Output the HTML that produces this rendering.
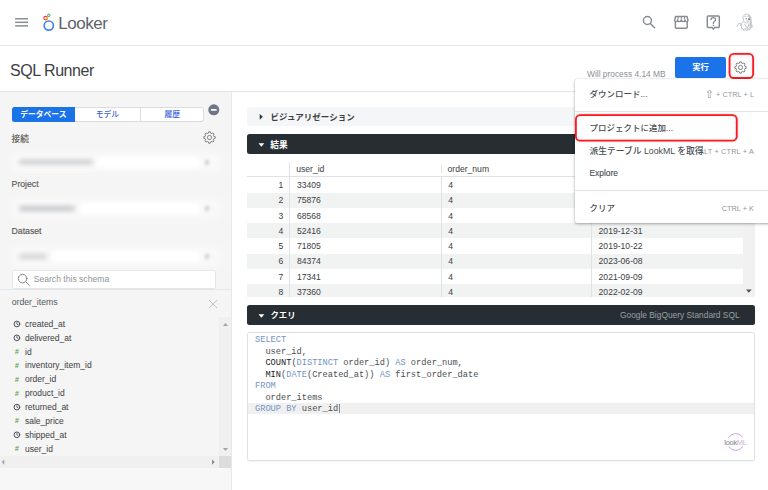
<!DOCTYPE html>
<html lang="ja">
<head>
<meta charset="utf-8">
<title>SQL Runner - Looker</title>
<style>
*{box-sizing:border-box;margin:0;padding:0}
html,body{width:768px;height:490px;overflow:hidden;background:#fff}
body{position:relative;font-family:"Liberation Sans","Noto Sans CJK JP",sans-serif;color:#3c4043;-webkit-font-smoothing:antialiased}
.abs{position:absolute;white-space:nowrap}
svg{position:absolute;overflow:visible}
/* header */
#hdr{left:0;top:0;width:768px;height:46px;border-bottom:1px solid #e3e5e8;background:#fff}
#ham i{position:absolute;left:15px;width:13px;height:1.5px;background:#8a9095;display:block}
#brand{left:58.3px;top:13.5px;font-size:17px;line-height:20px;letter-spacing:-0.45px;color:#5f6368}
/* title bar */
#tbar{left:0;top:46px;width:768px;height:46px;border-bottom:1px solid #e3e5e8;background:#fff}
#title{left:10px;top:60.5px;font-size:16px;line-height:20px;letter-spacing:-0.45px;color:#3c4043}
#proc{left:587px;top:69px;font-size:8.4px;line-height:11px;color:#8b9096}
#run{left:675px;top:57px;width:51px;height:21px;background:#1a73e8;border-radius:2px;color:#fff;font-weight:bold;font-size:8.3px;line-height:20.6px;text-align:center}
#gearbox{left:728.6px;top:53px;width:25.5px;height:26px;border:1.8px solid #fb1d25;border-radius:5px;box-shadow:0 0 2.5px rgba(120,0,0,.4),inset 0 0 4px rgba(0,0,0,.13)}
/* left panel */
#side{left:0;top:92px;width:232px;height:398px;background:#f5f5f5;border-right:1px solid #e6e8eb}
#tabs{left:11.7px;top:106.6px;width:192px;height:15px;background:#fff;border:1px solid #dadce0;border-radius:2.5px}
#tabs .t{position:absolute;top:-1px;height:15px;font-size:7.8px;line-height:16.6px;text-align:center;color:#3a5fd6;font-weight:500;overflow:hidden}
#tabs .t1{left:-1px;width:63.3px;background:#1a73e8;color:#fff;font-weight:bold;border-radius:2.5px 0 0 2.5px}
#tabs .t2{left:62.3px;width:64.7px}
#tabs .t3{left:127px;width:64px;border-left:1px solid #dadce0}
.lbl{font-size:8.7px;line-height:12px;color:#5a5754;left:11.6px;-webkit-text-stroke:.15px #5a5754}
.blur{filter:blur(2.6px)}
#sbox{left:12px;top:270.3px;width:204.3px;height:18.4px;background:#fff;border:1px solid #e4e6e9;border-radius:1.5px}
#sph{left:33.7px;top:273.2px;font-size:8.6px;line-height:12px;color:#8f9499}
#sline{left:0;top:289.4px;width:231px;height:1px;background:#e4e6e9}
#tname{left:11.7px;top:296.3px;font-size:8.7px;line-height:12px;color:#54585d}
.fld{left:25px;font-size:8.5px;line-height:12px;color:#3c4043}
.hash{left:14.7px;font-size:7.3px;line-height:10px;color:#65a44a;font-weight:bold;font-style:italic;margin-top:.7px}
#vtrack{left:219.3px;top:317.3px;width:12px;height:139px;background:#f0f0f0}
#htrack{left:0;top:456.3px;width:219.3px;height:11.7px;background:#f0f0f0}
#corner{left:219.3px;top:456.3px;width:12px;height:11.7px;background:#dcdcdc}
#sbottom{left:0;top:468px;width:231px;height:22px;background:#f7f7f7}
/* main */
.bar{left:247px;width:508px;border-radius:2.5px}
#vis{top:106.5px;height:19.8px;background:#f5f6f7}
#res{top:134.3px;height:19.6px;background:#262d33}
#qry{top:304.7px;height:20px;background:#262d33}
.btxt{font-weight:bold;font-size:8.5px;line-height:12px}
/* table */
.row{left:247px;width:495.5px;height:15.23px}
.g{background:#f1f3f3}
.cell{font-size:8.6px;line-height:12px;color:#3c4043}
.vl{width:1px;background:#dfe3e6}
/* editor */
#ed{left:247.3px;top:332.2px;width:507.5px;height:128.6px;border:1px solid #dcdfe3;border-radius:2.5px;background:#fff;box-shadow:0 1px 1px rgba(0,0,0,.04)}
#hl{left:248.3px;top:402.5px;width:505.5px;height:11.3px;background:#f0f0f0}
pre{position:absolute;left:255px;top:335.2px;font-family:"Liberation Mono",monospace;font-size:8.67px;line-height:11.54px;color:#4a4e52}
pre b{font-weight:normal;color:#7494c4}
pre u{text-decoration:none;color:#1f2327}
#cur{left:338.5px;top:403.6px;width:0.8px;height:9.4px;background:#8a8a8a}
/* menu */
#menu{left:575px;top:79px;width:200px;height:143.6px;background:#fff;border-radius:2px;box-shadow:0 1px 3px rgba(0,0,0,.32),0 0 1px rgba(0,0,0,.25)}
.mi{left:589.5px;font-size:8.5px;line-height:12px;color:#484c51;font-weight:500}
.sc{right:14px;font-size:7.3px;line-height:11px;color:#92979c;letter-spacing:.05px}
.dv{left:575px;width:193px;height:1px;background:#e3e5e8}
#hlbox{left:575px;top:114.3px;width:162.6px;height:26.6px;border:1.8px solid #fb1d25;border-radius:5px;box-shadow:0 0 2.5px rgba(90,0,0,.45),inset 0 0 3px rgba(0,0,0,.12)}
</style>
</head>
<body>
<!-- HEADER -->
<div id="hdr" class="abs"></div>
<svg style="left:14px;top:16px" width="16" height="12" viewBox="14 16 16 12" fill="#858b91"><rect x="15.1" y="18.05" width="12.9" height="1.45"/><rect x="15.1" y="21.6" width="12.9" height="1.45"/><rect x="15.1" y="25.15" width="12.9" height="1.45"/></svg>
<svg id="logo" style="left:42px;top:12px" width="14" height="20" viewBox="42 12 14 20">
  <circle cx="48.8" cy="25.6" r="4.6" fill="none" stroke="#4285f4" stroke-width="1.7"/>
  <circle cx="45.6" cy="18.1" r="1.8" fill="none" stroke="#ea4335" stroke-width="1.15"/>
  <path d="M47.3 17.2 A1.8 1.8 0 0 1 46.9 19.5" fill="none" stroke="#fbbc04" stroke-width="1.15"/>
  <circle cx="48.8" cy="15.3" r="1.2" fill="none" stroke="#34a853" stroke-width="1"/>
</svg>
<div id="brand" class="abs">Looker</div>
<!-- header icons -->
<svg style="left:640px;top:12px" width="120" height="22" viewBox="640 12 120 22" fill="none" stroke="#858b91" stroke-width="1.45" stroke-linecap="round" stroke-linejoin="round">
  <circle cx="647.4" cy="20.5" r="4"/>
  <path d="M650.4 23.6 L654.6 27.7"/>
  <!-- store -->
  <path d="M675.6 16.5 H687 L688 20.2 Q688 21.6 686.6 21.6 Q685.3 21.6 685 20.4 Q684.6 21.6 683.2 21.6 Q681.9 21.6 681.3 20.4 Q680.7 21.6 679.4 21.6 Q678 21.6 677.6 20.4 Q677.3 21.6 676 21.6 Q674.6 21.6 674.6 20.2 Z"/>
  <path d="M678.2 16.6 L677.7 20.3 M681.3 16.6 V20.3 M684.4 16.6 L684.9 20.3" stroke-width="1"/>
  <path d="M675.4 22 V27.2 Q675.4 28.2 676.4 28.2 H686.2 Q687.2 28.2 687.2 27.2 V22"/>
  <!-- help -->
  <path d="M708.2 15.9 H718.4 Q719.3 15.9 719.3 16.8 V26.5 Q719.3 27.4 718.4 27.4 H714.6 L713.3 29.2 L712 27.4 H708.2 Q707.3 27.4 707.3 26.5 V16.8 Q707.3 15.9 708.2 15.9 Z"/>
  <path d="M711 19.8 Q711 17.7 713.3 17.7 Q715.6 17.7 715.6 19.6 Q715.6 20.7 714.4 21.5 Q713.3 22.2 713.3 23.4" stroke-width="1.3"/>
  <circle cx="713.3" cy="25.4" r=".5" fill="#858b91" stroke-width=".6"/>
</svg>
<!-- avatar sketch -->
<svg style="left:736px;top:13px" width="18" height="19" viewBox="736 13 18 19" fill="none" stroke="#b3b6ba" stroke-width=".75" stroke-linecap="round">
  <path d="M742.6 18 Q743 14.4 746.4 14 Q750.2 13.8 750.9 18 Q751.4 22 751.8 25 Q752.6 26 752.8 27"/>
  <path d="M749.6 15.6 Q750.6 19 750.4 22.6 Q750.6 25.4 751.2 27.6 M748.6 15 Q749.8 17 749.8 19.4 M750 23 Q749.6 26 750.2 29"/>
  <path d="M743.6 18.5 Q743 21 744.6 22.6 Q746.4 23.8 748.2 22.4 Q749.4 21 749 19"/>
  <path d="M744.2 16.6 Q746 15.4 748.4 16.4" stroke="#c4c6c9"/>
  <circle cx="746.2" cy="18.7" r=".75" fill="#8e9195" stroke="none"/>
  <circle cx="748.9" cy="19.2" r=".9" fill="#7d8084" stroke="none"/>
  <path d="M746.4 21.2 Q747.2 21.8 748 21.2" stroke="#a4a7ab" stroke-width=".6"/>
  <path d="M743.2 22 Q741 22.6 740.6 25.6 M737 26.4 Q737.6 23.4 740 23.2 Q741.4 23.4 741 25 M741 25 Q741.6 28.4 743 29.6 Q746 31 749.6 29.6 Q751 28.2 751.4 25.4"/>
  <path d="M744.6 24.4 Q745.6 27 747.4 27.6 M748.8 24 Q748.8 26.4 747.4 27.6 M741.6 27.6 Q742.4 29.4 743.8 30.2 M745 28.6 Q746.6 29.4 748.6 28.8"/>
</svg>

<!-- TITLE BAR -->
<div id="tbar" class="abs"></div>
<div id="title" class="abs">SQL Runner</div>
<div id="proc" class="abs">Will process 4.14 MB</div>
<div id="run" class="abs">実行</div>
<div class="abs" style="left:729.5px;top:54px;width:23.7px;height:24px;border-radius:4px;box-shadow:0 0 3px rgba(120,0,0,.45),inset 0 0 4px rgba(0,0,0,.16)"></div>
<svg style="left:726px;top:50px" width="32" height="32" viewBox="726 50 32 32"><rect x="729.55" y="53.9" width="23.6" height="24.1" rx="4.3" fill="none" stroke="#fb1a22" stroke-width="1.8"/></svg>
<svg style="left:734px;top:61px" width="13" height="13" viewBox="-6.5 -6.5 13 13" fill="none" stroke="#6b7075" stroke-width=".85" stroke-linejoin="round">
  <path id="gearp" d="M-1.06 -4.42 L-0.85 -5.69 L0.85 -5.69 L1.06 -4.42 L2.38 -3.88 L3.42 -4.62 L4.62 -3.42 L3.88 -2.38 L4.42 -1.06 L5.69 -0.85 L5.69 0.85 L4.42 1.06 L3.88 2.38 L4.62 3.42 L3.42 4.62 L2.38 3.88 L1.06 4.42 L0.85 5.69 L-0.85 5.69 L-1.06 4.42 L-2.38 3.88 L-3.42 4.62 L-4.62 3.42 L-3.88 2.38 L-4.42 1.06 L-5.69 0.85 L-5.69 -0.85 L-4.42 -1.06 L-3.88 -2.38 L-4.62 -3.42 L-3.42 -4.62 L-2.38 -3.88 Z"/>
  <circle cx="0" cy="0" r="2.1"/>
</svg>

<!-- SIDE PANEL -->
<div id="side" class="abs"></div>
<div id="tabs" class="abs"><div class="t t1">データベース</div><div class="t t2">モデル</div><div class="t t3">履歴</div></div>
<svg style="left:208px;top:104.3px" width="12" height="12" viewBox="0 0 12 12"><circle cx="5.8" cy="5.8" r="5.5" fill="#6f7787"/><rect x="2.9" y="5" width="5.8" height="1.7" rx=".4" fill="#fff"/></svg>
<svg style="left:203.3px;top:131px" width="13" height="13" viewBox="-6.5 -6.5 13 13" fill="none" stroke="#6b7075" stroke-width=".85" stroke-linejoin="round">
  <path d="M-1.06 -4.42 L-0.85 -5.69 L0.85 -5.69 L1.06 -4.42 L2.38 -3.88 L3.42 -4.62 L4.62 -3.42 L3.88 -2.38 L4.42 -1.06 L5.69 -0.85 L5.69 0.85 L4.42 1.06 L3.88 2.38 L4.62 3.42 L3.42 4.62 L2.38 3.88 L1.06 4.42 L0.85 5.69 L-0.85 5.69 L-1.06 4.42 L-2.38 3.88 L-3.42 4.62 L-4.62 3.42 L-3.88 2.38 L-4.42 1.06 L-5.69 0.85 L-5.69 -0.85 L-4.42 -1.06 L-3.88 -2.38 L-4.62 -3.42 L-3.42 -4.62 L-2.38 -3.88 Z"/>
  <circle cx="0" cy="0" r="2.1"/>
</svg>
<div class="abs lbl" style="top:132.6px;font-size:8.7px">接続</div>
<div class="abs lbl" style="top:177.6px">Project</div>
<div class="abs lbl" style="top:225.2px">Dataset</div>
<!-- blurred selects -->
<div class="abs blur" style="left:12px;top:152.6px;width:208px;height:19px;background:#f9f9f9;border-radius:3px;filter:blur(3.2px)"></div>
<div class="abs blur" style="left:96px;top:156.5px;width:104px;height:11px;background:#fff"></div>
<div class="abs blur" style="left:19px;top:159.6px;width:74px;height:4.6px;background:#c2c4c8;border-radius:2px"></div>
<div class="abs blur" style="left:205px;top:159.5px;width:4px;height:5px;background:#d0d2d4;filter:blur(1.6px)"></div>
<div class="abs blur" style="left:12px;top:199.4px;width:208px;height:19px;background:#f9f9f9;border-radius:3px;filter:blur(3.2px)"></div>
<div class="abs blur" style="left:80px;top:203.3px;width:120px;height:11px;background:#fff"></div>
<div class="abs blur" style="left:19px;top:206.4px;width:56px;height:4.6px;background:#c2c4c8;border-radius:2px"></div>
<div class="abs blur" style="left:205px;top:206.3px;width:4px;height:5px;background:#d0d2d4;filter:blur(1.6px)"></div>
<div class="abs blur" style="left:12px;top:247.2px;width:208px;height:19px;background:#f9f9f9;border-radius:3px;filter:blur(3.2px)"></div>
<div class="abs blur" style="left:52px;top:251.1px;width:148px;height:11px;background:#fff"></div>
<div class="abs blur" style="left:19px;top:254.2px;width:28px;height:4.6px;background:#cfd1d4;border-radius:2px"></div>
<div class="abs blur" style="left:205px;top:254.1px;width:4px;height:5px;background:#d0d2d4;filter:blur(1.6px)"></div>
<!-- search -->
<div id="sbox" class="abs"></div>
<svg style="left:17px;top:273px" width="14" height="14" viewBox="0 0 14 14" fill="none" stroke="#777c82" stroke-width=".9" stroke-linecap="round"><circle cx="5.6" cy="5.6" r="4.3"/><path d="M8.8 8.8 L12.3 12.3"/></svg>
<div id="sph" class="abs">Search this schema</div>
<div id="sline" class="abs"></div>
<div id="tname" class="abs">order_items</div>
<svg style="left:208.6px;top:299.6px" width="9" height="9" viewBox="0 0 9 9" stroke="#b0b3b6" stroke-width=".8" stroke-linecap="round"><path d="M.3 .3 L7.9 7.9 M7.9 .3 L.3 7.9"/></svg>
<div id="vtrack" class="abs"></div>
<div id="htrack" class="abs"></div>
<div id="corner" class="abs"></div>
<div id="sbottom" class="abs"></div>
<svg style="left:0;top:317px" width="232" height="152" viewBox="0 317 232 152" fill="#a3a3a3">
  <path d="M223 326 L225.5 323 L228 326 Z"/>
  <path d="M223 448 L225.5 451 L228 448 Z"/>
  <path d="M4.3 459.4 L1.7 462.1 L4.3 464.8 Z"/>
  <path d="M212 459.4 L214.7 462.1 L212 464.8 Z" fill="#8a8a8a"/>
</svg>
<!-- fields -->
<svg style="left:13px;top:318px" width="9" height="136" viewBox="13 318 9 136" fill="none" stroke="#44484d" stroke-width=".95" stroke-linecap="round">
  <g id="clk"><circle cx="16.9" cy="324" r="2.85"/><path d="M16.9 322.6 V324.1 L17.9 324.6" stroke-width=".8"/></g>
  <use href="#clk" y="13.85"/>
  <use href="#clk" y="83.1"/>
  <use href="#clk" y="110.8"/>
</svg>
<div class="abs fld" style="top:317.90px">created_at</div>
<div class="abs fld" style="top:331.75px">delivered_at</div>
<div class="abs fld" style="top:345.60px">id</div>
<div class="abs fld" style="top:359.45px">inventory_item_id</div>
<div class="abs fld" style="top:373.30px">order_id</div>
<div class="abs fld" style="top:387.15px">product_id</div>
<div class="abs fld" style="top:401.00px">returned_at</div>
<div class="abs fld" style="top:414.85px">sale_price</div>
<div class="abs fld" style="top:428.70px">shipped_at</div>
<div class="abs fld" style="top:442.55px">user_id</div>
<div class="abs hash" style="top:346.30px">#</div>
<div class="abs hash" style="top:360.15px">#</div>
<div class="abs hash" style="top:374.00px">#</div>
<div class="abs hash" style="top:387.85px">#</div>
<div class="abs hash" style="top:415.55px">#</div>
<div class="abs hash" style="top:443.25px">#</div>

<!-- MAIN -->
<div id="vis" class="abs bar"></div>
<svg style="left:259px;top:113px" width="5" height="8" viewBox="0 0 5 8"><path d="M.7 .9 L3.9 3.8 L.7 6.7 Z" fill="#33373b"/></svg>
<div class="abs btxt" style="left:270.6px;top:110.9px;color:#3a3e43">ビジュアリゼーション</div>
<div id="res" class="abs bar"></div>
<svg style="left:258px;top:142px" width="7" height="6" viewBox="0 0 7 6"><path d="M.5 1.2 H6.3 L3.4 4.8 Z" fill="#fff"/></svg>
<div class="abs btxt" style="left:270.3px;top:139.2px;color:#fff;font-size:8.7px">結果</div>

<!-- table -->
<div class="abs row g" style="top:192.6px"></div>
<div class="abs row g" style="top:223.1px"></div>
<div class="abs row g" style="top:253.5px"></div>
<div class="abs row g" style="top:284px;height:13px"></div>
<div class="abs" style="left:742.5px;top:161px;width:12.5px;height:136px;background:#f1f1f1"></div>
<svg style="left:745px;top:288px" width="8" height="6" viewBox="0 0 8 6"><path d="M1 1.6 H6.6 L3.8 4.8 Z" fill="#505050"/></svg>
<div class="abs" style="left:247px;top:176.2px;width:495.5px;height:1px;background:#dfe3e6"></div>
<div class="abs vl" style="left:289.3px;top:161.7px;height:135.3px"></div>
<div class="abs vl" style="left:441px;top:165px;height:8px;background:#e3e6e9"></div>
<div class="abs vl" style="left:441px;top:177px;height:120px"></div>
<div class="abs vl" style="left:591.3px;top:165px;height:8px;background:#e3e6e9"></div>
<div class="abs vl" style="left:591.3px;top:177px;height:120px"></div>
<div class="abs cell" style="left:296.2px;top:163px">user_id</div>
<div class="abs cell" style="left:447.5px;top:163px">order_num</div>
<div class="abs cell" style="left:598.5px;top:163px">first_order_date</div>
<div class="abs cell" style="left:247px;width:36.3px;text-align:right;top:179.1px">1</div>
<div class="abs cell" style="left:297px;top:179.1px">33409</div>
<div class="abs cell" style="left:448.2px;top:179.1px">4</div>
<div class="abs cell" style="left:598.6px;top:179.1px">2019-05-19</div>
<div class="abs cell" style="left:247px;width:36.3px;text-align:right;top:194.3px">2</div>
<div class="abs cell" style="left:297px;top:194.3px">75876</div>
<div class="abs cell" style="left:448.2px;top:194.3px">4</div>
<div class="abs cell" style="left:598.6px;top:194.3px">2020-11-02</div>
<div class="abs cell" style="left:247px;width:36.3px;text-align:right;top:209.6px">3</div>
<div class="abs cell" style="left:297px;top:209.6px">68568</div>
<div class="abs cell" style="left:448.2px;top:209.6px">4</div>
<div class="abs cell" style="left:598.6px;top:209.6px">2022-03-14</div>
<div class="abs cell" style="left:247px;width:36.3px;text-align:right;top:224.8px">4</div>
<div class="abs cell" style="left:297px;top:224.8px">52416</div>
<div class="abs cell" style="left:448.2px;top:224.8px">4</div>
<div class="abs cell" style="left:598.6px;top:224.8px">2019-12-31</div>
<div class="abs cell" style="left:247px;width:36.3px;text-align:right;top:240.0px">5</div>
<div class="abs cell" style="left:297px;top:240.0px">71805</div>
<div class="abs cell" style="left:448.2px;top:240.0px">4</div>
<div class="abs cell" style="left:598.6px;top:240.0px">2019-10-22</div>
<div class="abs cell" style="left:247px;width:36.3px;text-align:right;top:255.2px">6</div>
<div class="abs cell" style="left:297px;top:255.2px">84374</div>
<div class="abs cell" style="left:448.2px;top:255.2px">4</div>
<div class="abs cell" style="left:598.6px;top:255.2px">2023-06-08</div>
<div class="abs cell" style="left:247px;width:36.3px;text-align:right;top:270.5px">7</div>
<div class="abs cell" style="left:297px;top:270.5px">17341</div>
<div class="abs cell" style="left:448.2px;top:270.5px">4</div>
<div class="abs cell" style="left:598.6px;top:270.5px">2021-09-09</div>
<div class="abs cell" style="left:247px;width:36.3px;text-align:right;top:285.7px">8</div>
<div class="abs cell" style="left:297px;top:285.7px">37360</div>
<div class="abs cell" style="left:448.2px;top:285.7px">4</div>
<div class="abs cell" style="left:598.6px;top:285.7px">2022-02-09</div>

<div id="qry" class="abs bar"></div>
<svg style="left:258px;top:312.6px" width="7" height="6" viewBox="0 0 7 6"><path d="M.5 1.2 H6.3 L3.4 4.8 Z" fill="#fff"/></svg>
<div class="abs btxt" style="left:270.4px;top:308.9px;color:#fff;font-size:8.4px">クエリ</div>
<div class="abs" style="right:28.4px;top:308.8px;font-size:8.4px;line-height:12px;color:#9aa0a6">Google BigQuery Standard SQL</div>

<div id="ed" class="abs"></div>
<div id="hl" class="abs"></div>
<pre><b>SELECT</b>
  user_id,
  <u>COUNT</u>(<b>DISTINCT</b> order_id) <b>AS</b> order_num,
  <u>MIN</u>(<b>DATE</b>(Created_at)) <b>AS</b> first_order_date
<b>FROM</b>
  order_items
<b>GROUP BY</b> user_id</pre>
<div id="cur" class="abs"></div>
<!-- lookML logo -->
<svg style="left:722px;top:432px" width="28" height="20" viewBox="722 432 28 20">
  <path d="M728.8 437.6 A8.1 8.1 0 0 1 742.7 437.6" fill="none" stroke="#c59bd7" stroke-width=".95"/>
  <path d="M728.8 446.4 A8.1 8.1 0 0 0 742.7 446.4" fill="none" stroke="#c59bd7" stroke-width=".95"/>
  <text x="724.3" y="445" font-family="Liberation Sans, sans-serif" font-size="7.5" letter-spacing="-.3" fill="#7d8186">look<tspan fill="#cfaede">ML</tspan></text>
</svg>

<!-- DROPDOWN MENU -->
<div id="menu" class="abs"></div>
<div class="abs mi" style="top:88.1px">ダウンロード...</div>
<div class="abs sc" style="top:89.2px"><span style="font-family:'DejaVu Sans',sans-serif;font-size:11px;line-height:1px;vertical-align:-1.1px">⇧</span> + CTRL + L</div>
<div class="abs dv" style="top:110.6px"></div>
<div class="abs" style="left:576px;top:115.3px;width:160.6px;height:25.2px;border-radius:4px;box-shadow:0 0 3px rgba(90,0,0,.5),inset 0 0 3px rgba(0,0,0,.14)"></div>
<svg style="left:572px;top:111px" width="170" height="34" viewBox="572 111 170 34"><rect x="575.9" y="115.2" width="160.8" height="25.5" rx="4.3" fill="none" stroke="#fb1a22" stroke-width="1.8"/></svg>
<div class="abs mi" style="top:122.3px">プロジェクトに追加...</div>
<div class="abs sc" style="top:145.6px;letter-spacing:.17px">ALT + CTRL + A</div>
<div class="abs mi" style="top:145px;font-size:8.75px">派生テーブル LookML を取得</div>
<div class="abs mi" style="top:167px;font-size:8.4px;-webkit-text-stroke:.12px #484c51">Explore</div>
<div class="abs dv" style="top:190px"></div>
<div class="abs mi" style="top:201.7px">クリア</div>
<div class="abs sc" style="top:202.6px">CTRL + K</div>
</body>
</html>
